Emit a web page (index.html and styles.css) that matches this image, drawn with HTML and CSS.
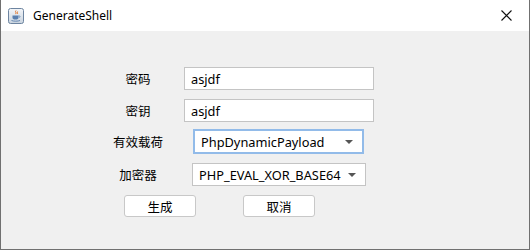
FILE: index.html
```
<!DOCTYPE html>
<html lang="zh">
<head>
    <meta charset="UTF-8">
    <title>GenerateShell</title>
    <link rel="stylesheet" href="styles.css">
</head>
<body>
    <div class="window">
        <div class="titlebar">
            <svg class="app-icon" width="16" height="16" viewBox="0 0 16 16">
                <defs>
                    <linearGradient id="ig" x1="0" y1="0" x2="0" y2="1">
                        <stop offset="0" stop-color="#f4f6f9"/>
                        <stop offset="1" stop-color="#c9d3de"/>
                    </linearGradient>
                </defs>
                <rect x="0.5" y="0.5" width="15" height="15" rx="2" fill="url(#ig)" stroke="#6d84a0"/>
                <path d="M8 2.5c-1.5 1.2 1.2 2-0.4 3.6M9.6 3.5c-1 0.8 0.8 1.3-0.3 2.4" stroke="#e0752b" stroke-width="1" fill="none"/>
                <path d="M4.5 7.5h6v2.2c0 1.2-1 1.8-3 1.8s-3-0.6-3-1.8z" fill="#5a7fae"/>
                <path d="M10.5 8h1c0.8 0 0.8 1.4-0.2 1.5" stroke="#5a7fae" stroke-width="0.8" fill="none"/>
                <path d="M3.5 12.5c2 0.9 6.5 0.9 8.5 0" stroke="#5a7fae" stroke-width="0.9" fill="none"/>
            </svg>
            <span class="title">GenerateShell</span>
            <span class="close">
                <svg width="11" height="11" viewBox="0 0 11 11">
                    <path d="M0.5 0.5L10.5 10.5M10.5 0.5L0.5 10.5" stroke="#111" stroke-width="1.1"/>
                </svg>
            </span>
        </div>
        <div class="content">
            <div class="row row-pass">
                <label class="label">密码</label>
                <div class="field text-field">asjdf</div>
            </div>
            <div class="row row-key">
                <label class="label">密钥</label>
                <div class="field text-field">asjdf</div>
            </div>
            <div class="row row-payload">
                <label class="label">有效载荷</label>
                <div class="field combo combo-focus">
                    <span>PhpDynamicPayload</span>
                    <span class="arrow"></span>
                </div>
            </div>
            <div class="row row-crypt">
                <label class="label">加密器</label>
                <div class="field combo">
                    <span>PHP_EVAL_XOR_BASE64</span>
                    <span class="arrow"></span>
                </div>
            </div>
            <div class="buttons">
                <button class="btn">生成</button>
                <button class="btn">取消</button>
            </div>
        </div>
    </div>
</body>
</html>
```

FILE: styles.css
```
* {
    box-sizing: border-box;
}
body {
    margin: 0;
    width: 530px;
    height: 250px;
    font-family: "Noto Sans", "Noto Sans CJK SC", sans-serif;
    font-size: 12px;
    color: #000;
    background-color: #f0f0f0;
}
.window {
    width: 530px;
    height: 250px;
    border: 1px solid #707070;
    border-top: none;
    background-color: #f0f0f0;
    display: flex;
    flex-direction: column;
}
.titlebar {
    height: 31px;
    background-color: #fff;
    display: flex;
    align-items: center;
    padding-left: 7px;
}
.app-icon {
    margin-right: 9px;
}
.title {
    flex: 1;
    font-size: 12px;
}
.close {
    display: flex;
    margin-right: 17px;
}
.content {
    display: flex;
    flex-direction: column;
    padding-top: 36px;
}
.row {
    display: flex;
    align-items: center;
}
.label {
    width: 76px;
    margin-left: 99px;
    text-align: center;
    font-size: 12.5px;
}
.field {
    display: flex;
    align-items: center;
    background-color: #fff;
    border: 1px solid #c4c4c4;
    font-size: 12.8px;
}
.text-field {
    width: 190px;
    height: 23px;
    margin-left: 8px;
    padding-left: 6px;
}
.row-key {
    margin-top: 9px;
}
.row-payload {
    margin-top: 7px;
}
.row-crypt {
    margin-top: 9px;
}
.combo {
    justify-content: space-between;
    padding: 0 9px 0 6px;
}
.row-payload .combo {
    width: 171px;
    height: 25px;
    margin-left: 17px;
}
.combo-focus {
    border: 2px solid #92bbe9;
    padding-left: 6px;
}
.row-crypt .combo {
    width: 174px;
    height: 23px;
    margin-left: 16px;
}
.arrow {
    width: 0;
    height: 0;
    border-left: 4px solid transparent;
    border-right: 4px solid transparent;
    border-top: 4px solid #555;
}
.buttons {
    display: flex;
    margin-top: 9px;
    margin-left: 123px;
    gap: 47px;
}
.btn {
    width: 72px;
    height: 22px;
    padding: 0;
    font-family: "Noto Sans CJK SC", sans-serif;
    font-size: 12.5px;
    color: #000;
    background-color: #fff;
    border: 1px solid #c8c8c8;
    border-radius: 3px;
}
```
